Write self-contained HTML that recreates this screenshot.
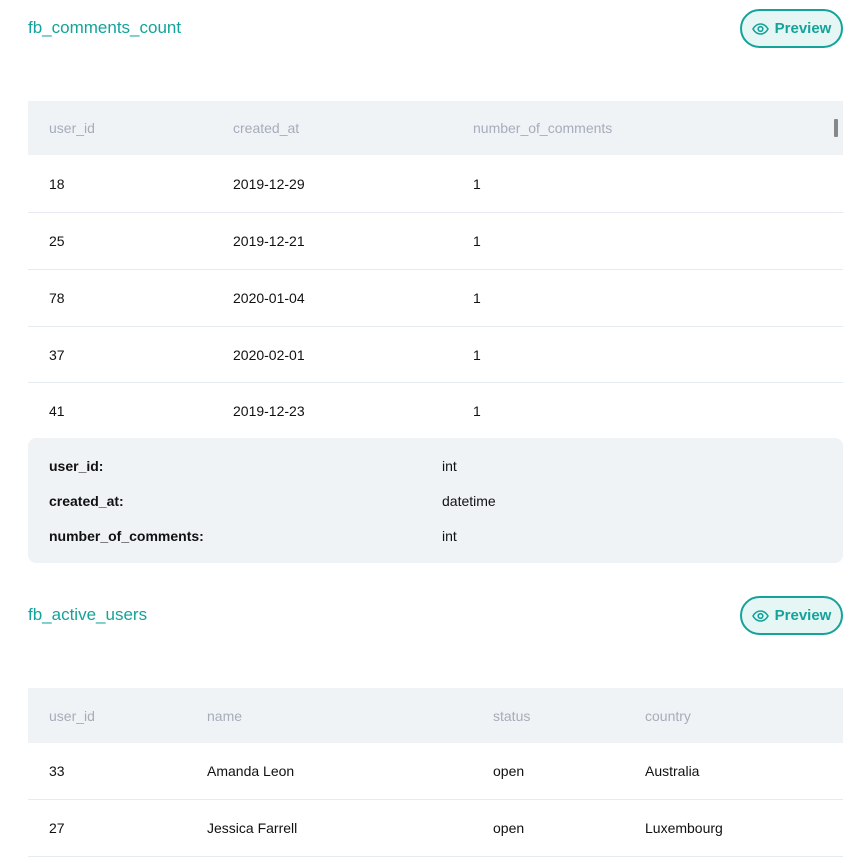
<!DOCTYPE html>
<html><head><meta charset="utf-8"><style>
*{margin:0;padding:0;box-sizing:border-box}
body{width:864px;height:863px;background:#fff;font-family:"Liberation Sans",Roboto,sans-serif;position:relative;overflow:hidden;color:#111}
.a{position:absolute}
.title{color:#14a39a;font-size:17px;left:28px}
.btn{left:740px;width:103px;height:39px;border:2px solid #14a39a;border-radius:20px;background:#e6f6f4;color:#14a39a;font-weight:bold;font-size:15px;display:flex;align-items:center;justify-content:center;gap:6px}
.hdr{left:28px;width:815px;background:#f0f3f6}
.row{left:28px;width:815px;border-bottom:1px solid #e6eaf2}
.t{position:absolute;font-size:14px;top:50%;transform:translateY(-50%);white-space:nowrap}
.hdr .t{color:#a6acba}
.schema{left:28px;width:815px;top:438px;height:125px;background:#f0f3f6;border-radius:8px}
.schema .t{font-size:14px}
</style></head><body>
<div class="a title" style="top:18px">fb_comments_count</div>
<div class="a btn" style="top:9px"><svg width="17" height="12" viewBox="0 0 17 12"><path d="M1 6C3 2.5 5.5 1 8.5 1S14 2.5 16 6C14 9.5 11.5 11 8.5 11S3 9.5 1 6Z" fill="none" stroke="#14a39a" stroke-width="1.6"/><circle cx="8.5" cy="6" r="2.3" fill="none" stroke="#14a39a" stroke-width="1.6"/></svg>Preview</div>

<div class="a hdr" style="top:101px;height:54px"><span class="t" style="left:21px">user_id</span><span class="t" style="left:205px">created_at</span><span class="t" style="left:445px">number_of_comments</span><div class="a" style="left:806px;top:18px;width:4px;height:18px;background:#888;border-radius:1px"></div></div>
<div class="a row" style="top:155px;height:58px"><span class="t" style="left:21px">18</span><span class="t" style="left:205px">2019-12-29</span><span class="t" style="left:445px">1</span></div>
<div class="a row" style="top:213px;height:57px"><span class="t" style="left:21px">25</span><span class="t" style="left:205px">2019-12-21</span><span class="t" style="left:445px">1</span></div>
<div class="a row" style="top:270px;height:57px"><span class="t" style="left:21px">78</span><span class="t" style="left:205px">2020-01-04</span><span class="t" style="left:445px">1</span></div>
<div class="a row" style="top:327px;height:56px"><span class="t" style="left:21px">37</span><span class="t" style="left:205px">2020-02-01</span><span class="t" style="left:445px">1</span></div>
<div class="a" style="left:28px;width:815px;top:383px;height:55px"><span class="t" style="left:21px">41</span><span class="t" style="left:205px">2019-12-23</span><span class="t" style="left:445px">1</span></div>

<div class="a schema">
<span class="t" style="left:21px;top:28px;font-weight:bold">user_id:</span><span class="t" style="left:414px;top:28px">int</span>
<span class="t" style="left:21px;top:63px;font-weight:bold">created_at:</span><span class="t" style="left:414px;top:63px">datetime</span>
<span class="t" style="left:21px;top:98px;font-weight:bold">number_of_comments:</span><span class="t" style="left:414px;top:98px">int</span>
</div>

<div class="a title" style="top:605px">fb_active_users</div>
<div class="a btn" style="top:596px"><svg width="17" height="12" viewBox="0 0 17 12"><path d="M1 6C3 2.5 5.5 1 8.5 1S14 2.5 16 6C14 9.5 11.5 11 8.5 11S3 9.5 1 6Z" fill="none" stroke="#14a39a" stroke-width="1.6"/><circle cx="8.5" cy="6" r="2.3" fill="none" stroke="#14a39a" stroke-width="1.6"/></svg>Preview</div>

<div class="a hdr" style="top:688px;height:55px"><span class="t" style="left:21px">user_id</span><span class="t" style="left:179px">name</span><span class="t" style="left:465px">status</span><span class="t" style="left:617px">country</span></div>
<div class="a row" style="top:743px;height:57px"><span class="t" style="left:21px">33</span><span class="t" style="left:179px">Amanda Leon</span><span class="t" style="left:465px">open</span><span class="t" style="left:617px">Australia</span></div>
<div class="a row" style="top:800px;height:57px"><span class="t" style="left:21px">27</span><span class="t" style="left:179px">Jessica Farrell</span><span class="t" style="left:465px">open</span><span class="t" style="left:617px">Luxembourg</span></div>
</body></html>
